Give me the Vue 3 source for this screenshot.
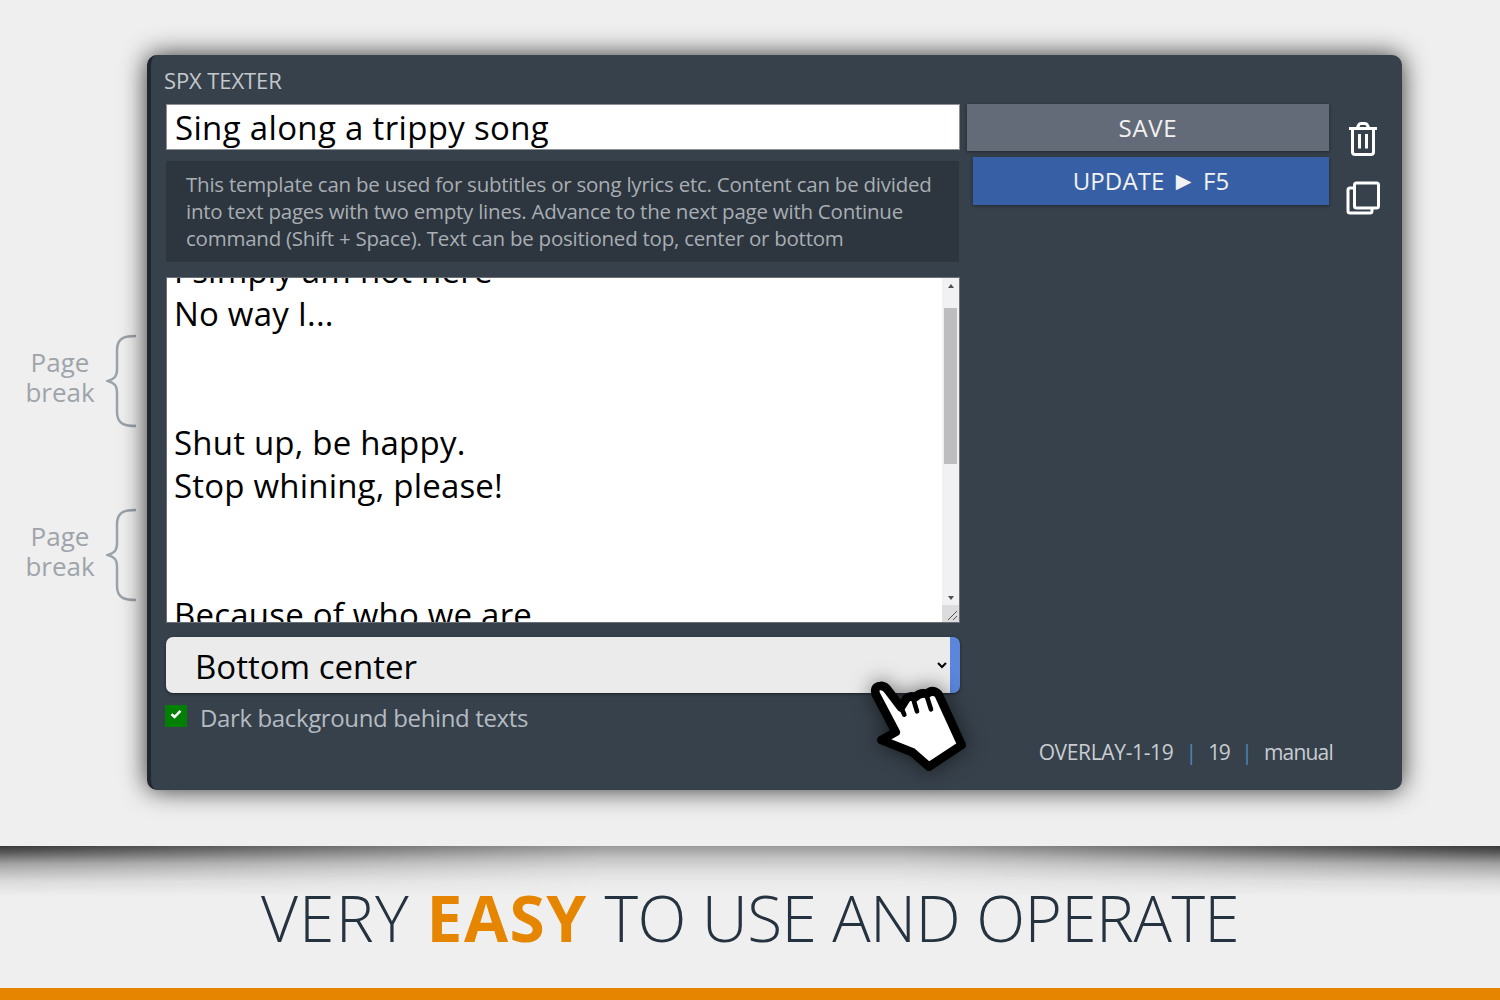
<template>
  <div class="page">
    <div class="stage">
      <div class="note note1">Page<br>break</div>
      <svg class="brace brace1" width="32" height="96" viewBox="0 0 32 96">
        <path d="M30 2 C20 2 11 3 11 16 V35 C11 43 8 45 2 47 C8 49 11 51 11 59 V78 C11 91 20 92 30 92" />
      </svg>
      <div class="note note2">Page<br>break</div>
      <svg class="brace brace2" width="32" height="96" viewBox="0 0 32 96">
        <path d="M30 2 C20 2 11 3 11 16 V35 C11 43 8 45 2 47 C8 49 11 51 11 59 V78 C11 91 20 92 30 92" />
      </svg>

      <div class="panel">
        <div class="left">
          <div class="title">SPX TEXTER</div>
          <input class="name" type="text" value="Sing along a trippy song">
          <div class="help">
            This template can be used for subtitles or song lyrics etc. Content can be divided
            into text pages with two empty lines. Advance to the next page with Continue
            command (Shift + Space). Text can be positioned top, center or bottom
          </div>
          <div class="lyrics-wrap">
            <textarea ref="lyrics" class="lyrics" :value="lyricsText"></textarea>
            <div class="scrollbar">
              <span class="arrow up"></span>
              <span class="track"><span class="thumb"></span></span>
              <span class="arrow down"></span>
              <svg class="corner" width="17" height="17" viewBox="0 0 17 17">
                <path d="M6 15 L15 6 M11 15 L15 11" />
              </svg>
            </div>
          </div>
          <select class="position">
            <option>Bottom center</option>
            <option>Top center</option>
            <option>Center</option>
          </select>
          <label class="check">
            <span class="box">
              <svg width="12" height="10" viewBox="0 0 12 10"><path d="M1.5 5.2 L4.5 8 L10.5 1.8" /></svg>
            </span>
            Dark background behind texts
          </label>
        </div>

        <div class="right">
          <button class="save">SAVE</button>
          <button class="update">UPDATE <span class="play">►</span> F5</button>
          <div class="info">
            <span class="wide">OVERLAY-1-19</span><i>|</i><span class="num">19</span><i>|</i><span>manual</span>
          </div>
        </div>

        <div class="tools">
          <svg width="32" height="36" viewBox="0 0 32 36">
            <path d="M2 7.5 H30 M5.5 7.5 V31 Q5.5 33.5 8 33.5 H24 Q26.500 33.500 26.500 31 V7.500 M10 7.500 L12 3.500 Q12.500 2.500 14 2.500 H18 Q19.500 2.500 20 3.500 L22 7.500 M12.500 13 V27.500 M19.500 13 V27.500" />
          </svg>
          <svg width="34" height="34" viewBox="0 0 34 34">
            <path d="M8 7 H4 Q2 7 2 9 V30 Q2 32 4 32 H24 Q26 32 26 30 V27" />
            <rect x="8.500" y="2" width="24" height="25" rx="2" />
          </svg>
        </div>

        <svg class="hand" width="130" height="150" viewBox="0 0 390 450">
          <path class="hand-body" d="M97 330 L140 306 L80 192 Q74 170 93 168 Q108 166 118 182 L156 232 L172 206 Q185 195 198 202 Q214 186 234 192 Q250 176 268 192 L338 345 L240 410 L190 367 Z" />
          <path class="hand-line" d="M156 232 L166 254 M192 204 L204 244 M232 194 L246 238" />
        </svg>
      </div>
    </div>

    <div class="banner">
      <h1><span class="very">VERY</span> <b>EASY</b> <span class="rest">TO USE AND OPERATE</span></h1>
    </div>
  </div>
</template>

<script setup>
import { ref, onMounted } from 'vue'

const lyrics = ref(null)

const lyricsText = [
  'I simply am not here',
  'No way I...',
  '',
  '',
  'Shut up, be happy.',
  'Stop whining, please!',
  '',
  '',
  'Because of who we are',
  'We cannot go too far',
  '',
  '',
  'Sing along a trippy song',
  'All night long',
  ''
].join('\n')

onMounted(() => {
  lyrics.value.scrollTop = 33
})
</script>

<style>
html, body {
  margin: 0;
  background: #efefef;
}
</style>

<style scoped>
.page {
  width: 1500px;
  height: 1000px;
  overflow: hidden;
  background: #efefef;
  font-family: "Open Sans", "Noto Sans", sans-serif;
  display: flex;
  flex-direction: column;
}

.stage {
  position: relative;
  height: 846px;
  padding: 55px 98px 0 147px;
  box-sizing: border-box;
}

.note {
  position: absolute;
  left: 10px;
  width: 100px;
  text-align: center;
  font-size: 26px;
  line-height: 30px;
  color: #9ea4aa;
}
.note1 { top: 347px; }
.note2 { top: 521px; }

.brace {
  position: absolute;
  left: 106px;
  fill: none;
  stroke: #9aa2aa;
  stroke-width: 2.5;
}
.brace1 { top: 334px; }
.brace2 { top: 508px; }

.panel {
  position: relative;
  display: flex;
  height: 735px;
  box-sizing: border-box;
  padding-left: 15px;
  background: #37414b;
  border-left: 4px solid #20272e;
  border-radius: 10px;
  box-shadow: 0 0 26px rgba(0, 0, 0, 0.8);
}

.left {
  width: 794px;
  display: flex;
  flex-direction: column;
}

.title {
  height: 49px;
  line-height: 50px;
  margin-left: -2px;
  font-size: 22px;
  letter-spacing: -0.100px;
  color: #c3c8cc;
}

.name {
  box-sizing: border-box;
  width: 794px;
  height: 46px;
  padding: 0 8px;
  border: 1px solid #8a9096;
  background: #fff;
  color: #000;
  font-family: inherit;
  font-size: 33px;
  letter-spacing: 0.330px;
}

.help {
  box-sizing: border-box;
  width: 793px;
  height: 101px;
  margin-top: 11px;
  padding: 10px 20px;
  background: #2d353e;
  color: #a8aeb4;
  font-size: 20.500px;
  line-height: 27px;
  letter-spacing: -0.240px;
}

.lyrics-wrap {
  position: relative;
  margin-top: 15px;
}

.lyrics {
  box-sizing: border-box;
  display: block;
  width: 794px;
  height: 346px;
  margin: 0;
  padding: 4px 7px;
  border: 1px solid #6a7076;
  background: #fff;
  color: #000;
  font-family: inherit;
  font-size: 33px;
  line-height: 43px;
  letter-spacing: 0.200px;
  outline: none;
  resize: none;
}

.scrollbar {
  position: absolute;
  top: 1px;
  right: 1px;
  bottom: 1px;
  width: 17px;
  display: flex;
  flex-direction: column;
  background: #f1f1f1;
}
.arrow {
  flex: 0 0 15px;
  display: flex;
  align-items: center;
  justify-content: center;
}
.arrow::before {
  content: "";
  border-left: 3.500px solid transparent;
  border-right: 3.500px solid transparent;
}
.up::before { border-bottom: 4px solid #505050; }
.down::before { border-top: 4px solid #505050; }
.track {
  flex: 1;
  padding: 15px 2px 0;
}
.thumb {
  display: block;
  height: 156px;
  background: #bdbdbd;
}
.corner {
  flex: 0 0 17px;
  background: #dcdcdc;
  fill: none;
  stroke: #555;
  stroke-width: 1;
}

.position {
  box-sizing: border-box;
  width: 794px;
  height: 56px;
  margin-top: 14px;
  padding: 2px 0 0 25px;
  border: 0;
  border-right: 10px solid #5b86dc;
  border-radius: 7px;
  background: #ebebeb;
  color: #000;
  font-family: inherit;
  font-size: 33px;
  box-shadow: 0 1px 3px rgba(0, 0, 0, 0.5);
}

.check {
  display: flex;
  align-items: center;
  height: 24px;
  margin: 12px 0 0 -1px;
  color: #b4bbc2;
  font-size: 24px;
  letter-spacing: -0.370px;
}

.box {
  display: flex;
  align-items: center;
  justify-content: center;
  width: 22px;
  height: 22px;
  margin: -3px 13px 0 0;
  background: #008000;
}
.box svg {
  margin-top: -3px;
  fill: none;
  stroke: #fff;
  stroke-width: 2.500;
}

.right {
  width: 362px;
  margin-left: 7px;
  display: flex;
  flex-direction: column;
  align-items: flex-end;
  padding-top: 49px;
}

button {
  border: 0;
  color: #f2f2f2;
  font-family: inherit;
  font-size: 24px;
  box-shadow: 0 1px 3px rgba(0, 0, 0, 0.4);
}
.save {
  width: 362px;
  height: 47px;
  background: #636b78;
  letter-spacing: 0.700px;
}
.update {
  width: 356px;
  height: 48px;
  margin-top: 6px;
  padding-bottom: 3px;
  background: #375fa5;
  letter-spacing: 0.100px;
}
.play {
  font-size: 26px;
  line-height: 0;
}

.info {
  margin-top: auto;
  margin-bottom: 24px;
  margin-right: -4px;
  display: flex;
  gap: 12px;
  color: #c8cdd2;
  font-size: 21px;
  line-height: 28px;
  letter-spacing: -0.800px;
}
.info .wide { letter-spacing: -0.350px; }
.info .num { letter-spacing: -1.500px; }
.info i {
  font-style: normal;
  color: #4f86bb;
}

.tools {
  display: flex;
  flex-direction: column;
  align-items: center;
  gap: 24px;
  width: 68px;
  padding-top: 66px;
}
.tools svg {
  fill: none;
  stroke: #fff;
  stroke-width: 3;
}

.hand {
  position: absolute;
  left: 698px;
  top: 575px;
  filter: drop-shadow(0 0 10px rgba(0, 0, 0, 0.55));
}
.hand-body {
  fill: #fff;
  stroke: #000;
  stroke-width: 26;
  stroke-linejoin: round;
}
.hand-line {
  fill: none;
  stroke: #000;
  stroke-width: 14;
  stroke-linecap: round;
}

.banner {
  position: relative;
  flex: 1;
  border-bottom: 12px solid #e58500;
  background: linear-gradient(to bottom, #a0a0a0 0, #c8c8c8 12px, #dfdfdf 24px, #ebebeb 36px, #efefef 50px);
  display: flex;
  justify-content: center;
  align-items: center;
}
.banner::before {
  content: "";
  position: absolute;
  top: 0;
  left: 0;
  right: 0;
  height: 50px;
  background: linear-gradient(to right, rgba(30, 30, 30, 0.8) 0, rgba(30, 30, 30, 0.42) 20%, rgba(30, 30, 30, 0.05) 40%, rgba(30, 30, 30, 0.05) 60%, rgba(30, 30, 30, 0.42) 80%, rgba(30, 30, 30, 0.8) 100%);
  -webkit-mask-image: linear-gradient(to bottom, #000, rgba(0, 0, 0, 0.35) 35%, rgba(0, 0, 0, 0.1) 70%, transparent);
  mask-image: linear-gradient(to bottom, #000, rgba(0, 0, 0, 0.35) 35%, rgba(0, 0, 0, 0.1) 70%, transparent);
}

h1 {
  margin: 0;
  font-size: 64px;
  font-weight: 300;
  color: #25323f;
  white-space: nowrap;
}
h1 b {
  font-weight: 700;
  color: #e58500;
  letter-spacing: 1.500px;
}
.very { letter-spacing: 1.250px; }
.rest { letter-spacing: -0.600px; }
</style>
